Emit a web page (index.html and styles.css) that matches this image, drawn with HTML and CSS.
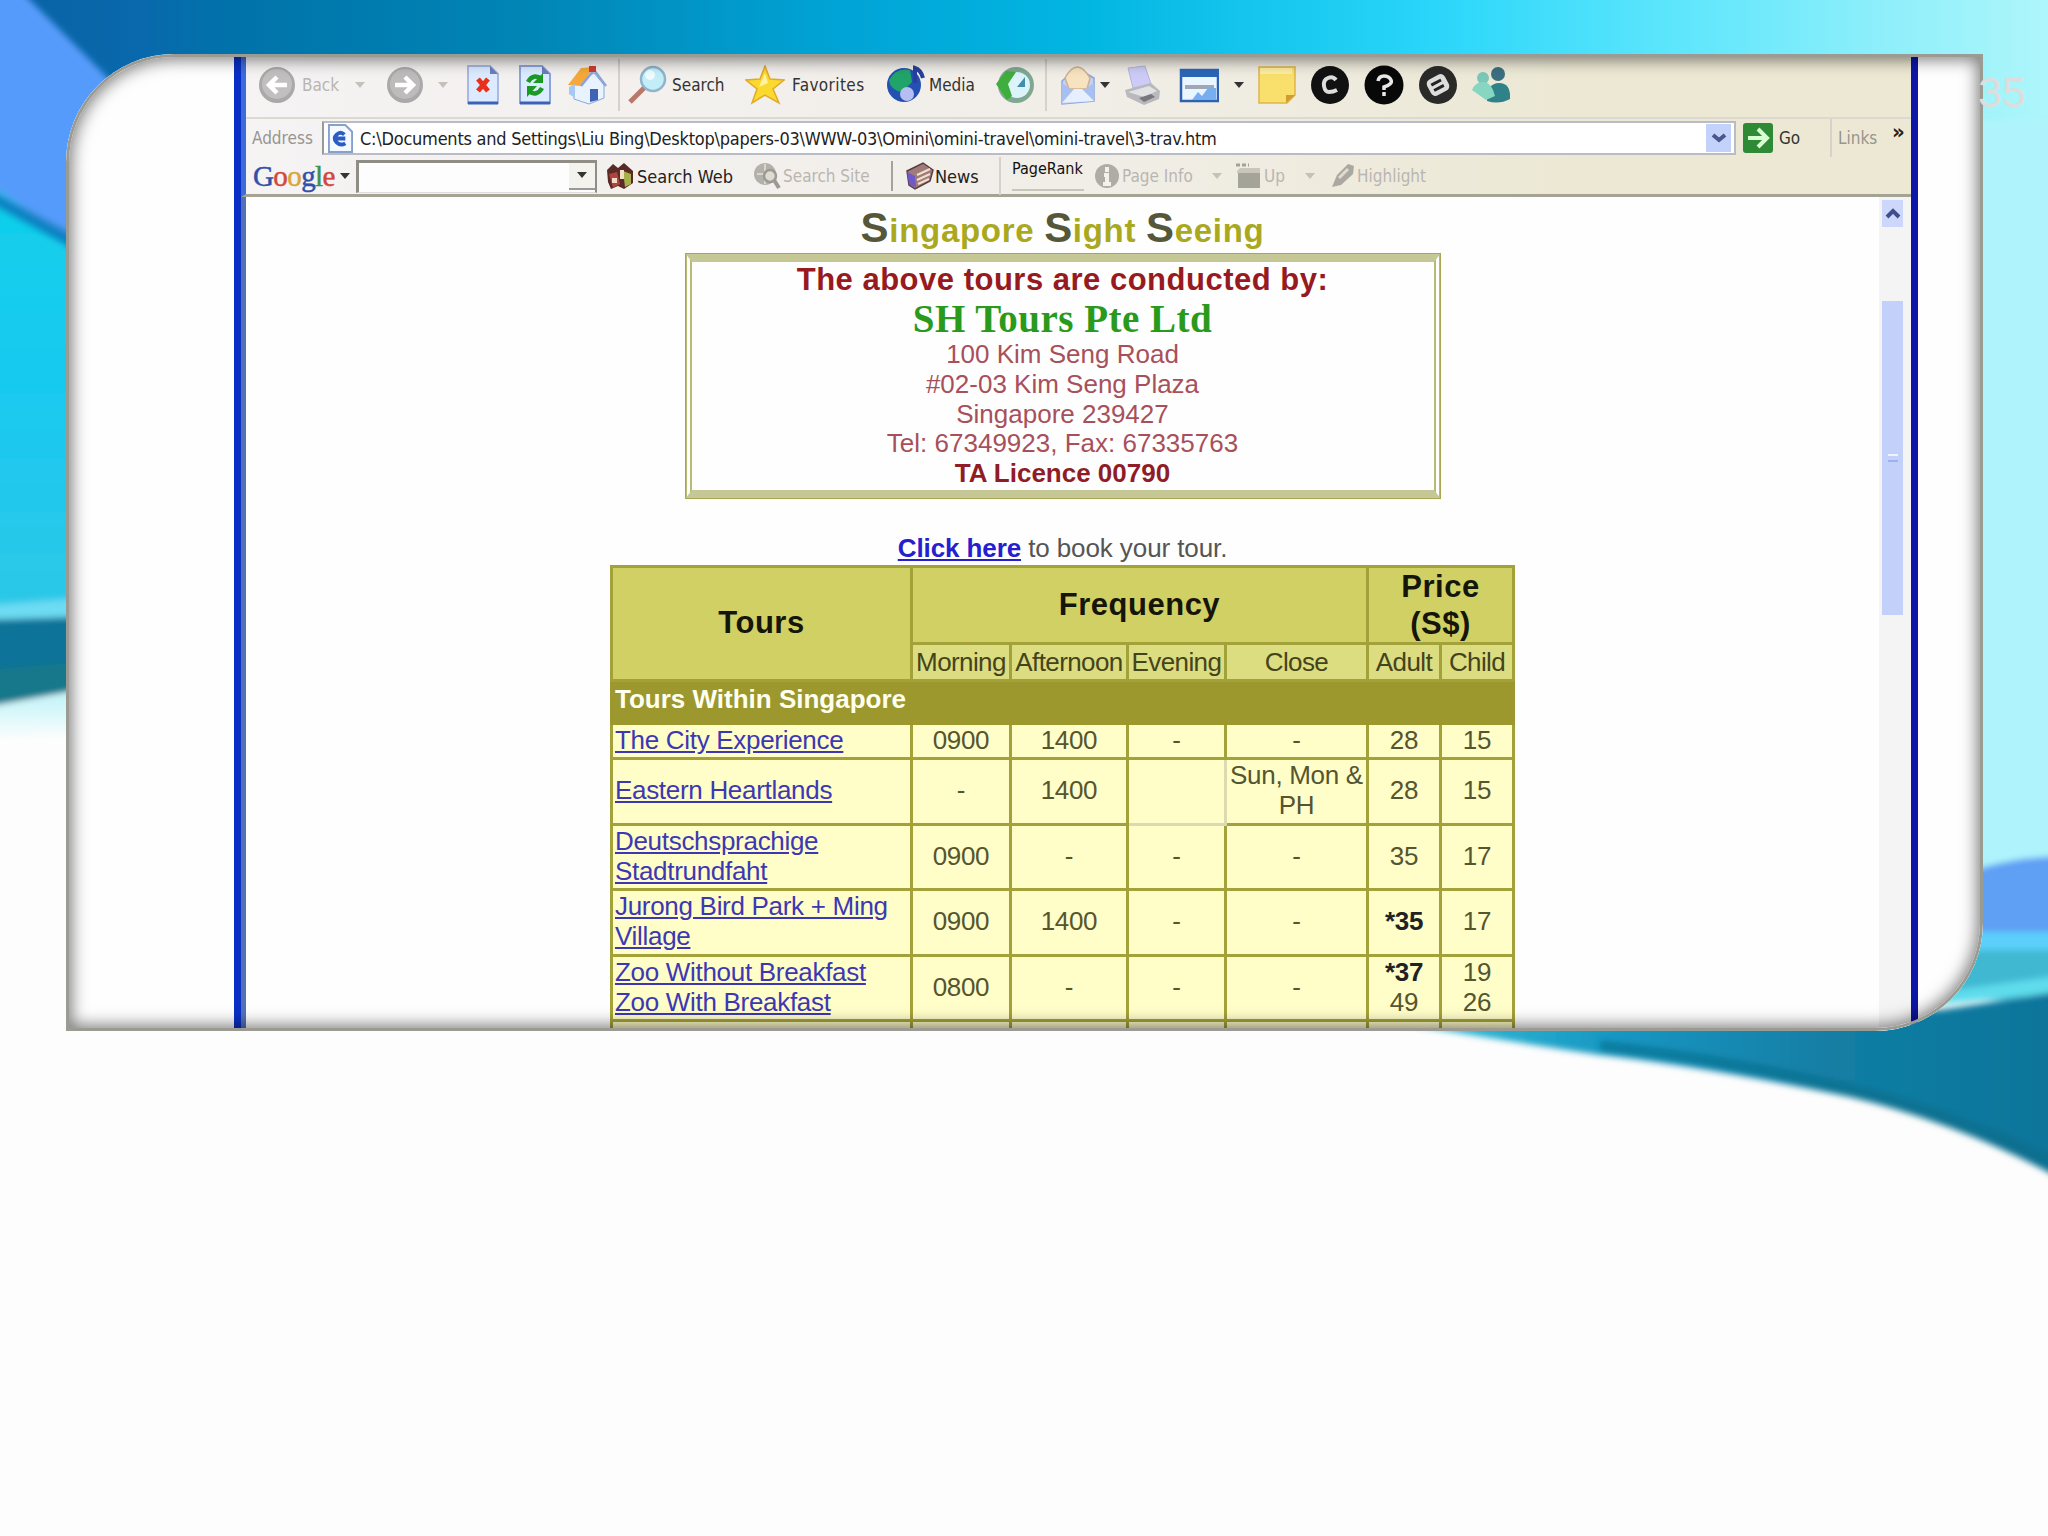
FILE: index.html
```
<!DOCTYPE html>
<html lang="en">
<head>
  <meta charset="UTF-8">
  <title>Singapore Sight Seeing</title>
  <link rel="stylesheet" href="styles.css">
</head>
<body>

<!-- wave background -->
<svg class="waves" viewBox="0 0 2048 1536" width="2048" height="1536" aria-hidden="true">
  <defs>
    <linearGradient id="sky" x1="0" x2="1" y1="0" y2="0">
      <stop offset="0" stop-color="#0a62a4"/>
      <stop offset=".07" stop-color="#0869ac"/>
      <stop offset=".12" stop-color="#0074aa"/>
      <stop offset=".26" stop-color="#0086b6"/>
      <stop offset=".4" stop-color="#00a2d4"/>
      <stop offset=".53" stop-color="#02b6e2"/>
      <stop offset=".7" stop-color="#2ad6fa"/>
      <stop offset=".82" stop-color="#5ee6fc"/>
      <stop offset=".92" stop-color="#8eeffa"/>
      <stop offset="1" stop-color="#aef6fb"/>
    </linearGradient>
    <linearGradient id="sea" x1="0" x2="1" y1="0" y2="0">
      <stop offset="0" stop-color="#3cc4dc"/>
      <stop offset=".35" stop-color="#1596c2"/>
      <stop offset=".65" stop-color="#127ea4"/>
      <stop offset="1" stop-color="#0f7499"/>
    </linearGradient>
    <linearGradient id="cyan" x1="0" x2="0" y1="0" y2="1">
      <stop offset="0" stop-color="#0fd0ea"/>
      <stop offset=".5" stop-color="#1ac9f0"/>
      <stop offset="1" stop-color="#2fc8e6"/>
    </linearGradient>
    <linearGradient id="foam" x1="0" x2="0" y1="0" y2="1">
      <stop offset="0" stop-color="#b5f2f8"/>
      <stop offset="1" stop-color="#fdfdfd"/>
    </linearGradient>
    <filter id="soft"><feGaussianBlur stdDeviation="3"/></filter>
  </defs>
  <rect width="2048" height="1536" fill="#fdfdfd"/>
  <rect width="2048" height="200" fill="url(#sky)"/>
  <g filter="url(#soft)">
    <path d="M-20-20H10L110 80V260H-20z" fill="#559bfb"/>
    <path d="M-20 180L110 260V620H-20z" fill="url(#cyan)"/>
    <path d="M-20 184L110 254V270L-20 198z" fill="#0f83c4"/>
    <path d="M-20 606L110 596V620H-20z" fill="#6ddcf3"/>
    <path d="M-20 620L110 616V680L-20 708z" fill="#0c7398"/>
    <path d="M-20 670L110 660V684L-20 708z" fill="#14788a"/>
    <path d="M-20 708L110 686V730L-20 740z" fill="url(#foam)"/>
    <path d="M1950 120H2070V900H1950z" fill="#aff4fc"/>
    <path d="M1950 880Q2000 856 2070 856V960H1950z" fill="#5f9ff4"/>
    <path d="M1950 932H2070V955H1950z" fill="#5cd0fa"/>
    <path d="M1950 950H2070V1000H1950z" fill="#3fb8d2"/>
    <path d="M1940 992L2070 974V992L1940 1004z" fill="#5fdcec"/>
    <path d="M1380 1010H1940L2070 990V1184Q1960 1122 1850 1097Q1700 1066 1600 1055Q1500 1040 1380 1020z" fill="url(#sea)"/>
    <path d="M1600 1052Q1900 1084 2070 1184V1164Q1900 1074 1600 1040z" fill="#0c6c88" opacity=".6"/>
  </g>
</svg>

<div class="slide-number">35</div>

<div class="frame">
  <div class="window">

    <div class="bars">
      <div class="bar bar-main">
        <svg class="icon" viewBox="0 0 40 40"><circle cx="19" cy="20" r="18" fill="#aaa8a8"/><circle cx="19" cy="19" r="15" fill="#c2bfc0"/><path d="M29 20H12M19 12l-8 8 8 8" stroke="#fff" stroke-width="4.5" fill="none"/></svg>
        <span class="off">Back</span>
        <i class="caret off"></i>
        <svg class="icon" viewBox="0 0 40 40"><circle cx="19" cy="20" r="18" fill="#aaa8a8"/><circle cx="19" cy="19" r="15" fill="#bdbbbb"/><path d="M9 20h17M19 12l8 8-8 8" stroke="#fff" stroke-width="4.5" fill="none"/></svg>
        <i class="caret off"></i>
        <svg class="icon" viewBox="0 0 40 40"><path d="M1 1h22l8 8v29H1z" fill="#dcebff" stroke="#a9b8e4" stroke-width="2"/><path d="M23 1v8h8z" fill="#6a7fc4"/><path d="M1 38h30" stroke="#3a62b8" stroke-width="3"/><path d="M11 14l10 12M21 14L11 26" stroke="#e8301c" stroke-width="5"/></svg>
        <svg class="icon" viewBox="0 0 40 40"><path d="M1 1h22l8 8v29H1z" fill="#dcebff" stroke="#8da3dc" stroke-width="2"/><path d="M23 1v8h8z" fill="#6a7fc4"/><path d="M1 38h30" stroke="#3a62b8" stroke-width="3"/><path d="M9 17q5-9 14-3M23 23q-5 9-14 3" stroke="#1a9a24" stroke-width="4.5" fill="none"/><path d="M24 8v10H14zM8 32V21h10z" fill="#1a9a24"/></svg>
        <svg class="icon" viewBox="0 0 40 40"><path d="M7 20v14l15 5 15-6V20L27 8z" fill="#e9f2ff" stroke="#88a8dc"/><path d="M1 20L14 3l13-1-13 19z" fill="#f6a93a"/><path d="M14 21L27 5l12 16" stroke="#8aa5d8" stroke-width="2.5" fill="none"/><path d="M22 1h7v6h-7z" fill="#d03c30"/><path d="M23 24h8v11l-8 2z" fill="#3f63b4"/><path d="M2 22l6-3v14l-6-4z" fill="#a8c8f4"/></svg>
        <i class="sep"></i>
        <svg class="icon" viewBox="0 0 40 40"><path d="M3 37L18 22" stroke="#b8796a" stroke-width="5"/><circle cx="26" cy="14" r="12" fill="#c3eef8" stroke="#8fb4cc" stroke-width="2.5"/><circle cx="23" cy="10" r="5" fill="#effcff"/></svg>
        <span>Search</span>
        <svg class="icon" viewBox="0 0 40 40"><path d="M20 1l5 13 14 1-11 9 6 14-14-8-13 8 5-14L1 15l14-1z" fill="#fbd92e" stroke="#e3a92a" stroke-width="1.5"/><path d="M20 8l3 10-9 4z" fill="#fff3a0"/></svg>
        <span class="fav">Favorites</span>
        <svg class="icon" viewBox="0 0 40 40"><circle cx="18" cy="20" r="17" fill="#2450b4"/><path d="M3 15Q10 2 24 5l2 12-10 10Q4 25 3 15z" fill="#21a46a"/><circle cx="21" cy="29" r="7" fill="#b5bef2"/><path d="M29 18V3q6 2 8 10" stroke="#27409c" stroke-width="4" fill="none"/></svg>
        <span>Media</span>
        <svg class="icon" viewBox="0 0 40 40"><circle cx="21" cy="20" r="18" fill="#7fa892"/><circle cx="22" cy="20" r="13" fill="#dcf3fa"/><path d="M1 19l10-13 10 1-8 12 4 12-5 4z" fill="#3fae3c"/><path d="M22 22l8-10v10z" fill="#3f8fac"/></svg>
        <i class="sep"></i>
        <svg class="icon" viewBox="0 0 40 40"><path d="M2 16L17 3l17 10v23L2 39z" fill="#c2d2f6" stroke="#8ea4dc" stroke-width="1.5"/><path d="M5 13q12-22 25 0l-3 11H9z" fill="#f7e3c0" stroke="#d0b090" stroke-width="1.5"/><path d="M2 18l16 11 16-11v18L2 39z" fill="#a8bff2"/><path d="M2 38l12-14h8l12 12" fill="#e6effe"/></svg>
        <i class="caret"></i>
        <svg class="icon" viewBox="0 0 40 40"><path d="M5 3l17-2 6 18-18 4z" fill="#ccccf6" stroke="#b4b4dc"/><path d="M2 25l26-7 9 8-1 8-15 6L4 32z" fill="#b9b8bd"/><path d="M5 27l21-6 8 5-13 6z" fill="#e2e1e4"/><path d="M16 33l12-4 4 3-11 5z" fill="#77777c"/></svg>
        <svg class="icon" viewBox="0 0 40 40"><rect x="2" y="5" width="37" height="31" fill="#e9f5ff" stroke="#2c62b0" stroke-width="2.5"/><path d="M1 4h39v8H1z" fill="#2a66b8"/><path d="M6 22h29" stroke="#a0a8b8" stroke-width="4"/><path d="M13 35l6-8 4 4 6-8 8 0v12z" fill="#76aef0"/></svg>
        <i class="caret"></i>
        <svg class="icon" viewBox="0 0 40 40"><path d="M2 2h36v28l-8 8H2z" fill="#f9df6c" stroke="#e0b548" stroke-width="1.5"/><path d="M3 3h32v6H3z" fill="#fdeea0"/><path d="M38 30h-9v8z" fill="#cf9c30"/></svg>
        <svg class="icon" viewBox="0 0 40 40"><circle cx="20" cy="20" r="19" fill="#111"/><path d="M26 15q-3-4-8-2t-4 8 5 6 8-2" stroke="#ddd" stroke-width="4" fill="none"/></svg>
        <svg class="icon" viewBox="0 0 40 40"><circle cx="20" cy="20" r="19.5" fill="#080808"/><path d="M14 16q1-5 6-5t7 4-7 7v3M20 27v4" stroke="#e8e8e8" stroke-width="3.5" fill="none"/></svg>
        <svg class="icon" viewBox="0 0 40 40"><circle cx="20" cy="20" r="19" fill="#2a2a28"/><g transform="rotate(-28 20 20)"><rect x="10" y="11" width="20" height="18" rx="5" fill="#ddd"/><path d="M14 17h11M14 23h11" stroke="#222" stroke-width="3"/></g></svg>
        <svg class="icon" viewBox="0 0 40 40"><circle cx="27" cy="9" r="7" fill="#3a7080"/><path d="M16 36q0-18 12-18t11 16q-11 6-23 2z" fill="#2f8287"/><circle cx="12" cy="13" r="6" fill="#7cc8b8"/><path d="M1 25q4-9 12-8t11 14l-9 4z" fill="#86d6c2"/></svg>
      </div>

      <div class="bar bar-address">
        <span class="off dim">Address</span>
        <div class="address">
          <svg class="page-icon" viewBox="0 0 28 30"><path d="M2 1h17l7 7v21H2z" fill="#f4f9ff" stroke="#8aa0cc" stroke-width="2"/><path d="M18 11q-4-4-8 0t0 8 9 1M7 15h12" stroke="#2a5cc4" stroke-width="4" fill="none"/></svg>
          <span class="url">C:\Documents and Settings\Liu Bing\Desktop\papers-03\WWW-03\Omini\omini-travel\omini-travel\3-trav.htm</span>
          <span class="drop"><svg viewBox="0 0 16 10" width="16" height="10"><path d="M2 2l6 5 6-5" stroke="#46588c" stroke-width="4" fill="none"/></svg></span>
        </div>
        <svg class="go" viewBox="0 0 30 30"><rect width="30" height="30" rx="3" fill="#2f8a35"/><path d="M5 15h18M15 6l9 9-9 9" stroke="#d8ffd0" stroke-width="4" fill="none"/></svg>
        <span>Go</span>
        <i class="sep"></i>
        <span class="dim">Links</span>
        <b class="more">»</b>
      </div>

      <div class="bar bar-google">
        <span class="google"><span class="g1">G</span><span class="g2">o</span><span class="g3">o</span><span class="g1">g</span><span class="g4">l</span><span class="g2">e</span></span>
        <i class="caret"></i>
        <div class="query"><span class="query-drop"><i class="caret"></i></span></div>
        <svg class="small" viewBox="0 0 28 28"><path d="M1 8l6-6 5 4 6-5 9 8v12l-9 6-6-3-7 3-3-7z" fill="#5a2a26"/><path d="M3 12l8-2 3 12-7 4z" fill="#b0433c"/><path d="M6 16h5v5H6z" fill="#f3d8cc"/><path d="M17 9l8 3v10l-6 3z" fill="#a8b04c"/><path d="M14 8h4v9h-4z" fill="#efe2c4"/></svg>
        <span class="strong">Search Web</span>
        <svg class="small" viewBox="0 0 28 28"><circle cx="12" cy="12" r="11" fill="#b3b1aa"/><path d="M4 12h16M12 2v20" stroke="#d8d5cc" stroke-width="2"/><circle cx="17" cy="14" r="6" fill="#dedbd2" stroke="#9c9a94" stroke-width="2.5"/><path d="M21 18l5 8" stroke="#9c9a94" stroke-width="4"/></svg>
        <span class="off">Search Site</span>
        <i class="sep dark"></i>
        <svg class="small" viewBox="0 0 28 28"><path d="M1 9L17 1l10 7-3 11-15 8-6-4z" fill="#a07c78" stroke="#5c3c44" stroke-width="1.5"/><path d="M1 10l8 4 1 12-7-4z" fill="#6f58c8"/><path d="M11 13L24 7M11 18l13-6M12 22l11-5" stroke="#f0e0d0" stroke-width="2"/></svg>
        <span class="strong">News</span>
        <i class="sep"></i>
        <div class="pagerank">PageRank</div>
        <svg class="small" viewBox="0 0 28 28"><circle cx="13" cy="14" r="12" fill="#aeaca4"/><path d="M13 5v5M10 13h3v8M9 22h8" stroke="#f4f1e8" stroke-width="4" fill="none"/></svg>
        <span class="off">Page Info</span>
        <i class="caret off"></i>
        <svg class="small" viewBox="0 0 28 28"><path d="M1 3h13" stroke="#a3a198" stroke-width="3" stroke-dasharray="4 2"/><path d="M2 9l3-3h20v5H2z" fill="#c9c7bd"/><rect x="3" y="11" width="22" height="15" fill="#a5a49b"/></svg>
        <span class="off">Up</span>
        <i class="caret off"></i>
        <svg class="small" viewBox="0 0 28 28"><path d="M2 25l5-12L18 2l6 2-1 8-12 11z" fill="#aaa8a0"/><path d="M9 16l9-9" stroke="#dedbd2" stroke-width="3"/></svg>
        <span class="off">Highlight</span>
      </div>
    </div>

    <div class="view">
      <div class="page">
        <h1><b>S</b>ingapore <b>S</b>ight <b>S</b>eeing</h1>

        <div class="operator">
          <div class="lead">The above tours are conducted by:</div>
          <div class="company">SH Tours Pte Ltd</div>
          <p>100 Kim Seng Road<br>#02-03 Kim Seng Plaza<br>Singapore 239427<br>Tel: 67349923, Fax: 67335763<br><b>TA Licence 00790</b></p>
        </div>

        <p class="book"><a href="#">Click here</a> to book your tour.</p>

        <table class="tours">
          <colgroup><col class="c1"><col class="c2"><col class="c3"><col class="c4"><col class="c5"><col class="c6"><col class="c7"></colgroup>
          <tr class="head"><th rowspan="2">Tours</th><th colspan="4">Frequency</th><th colspan="2">Price (S$)</th></tr>
          <tr class="sub"><td>Morning</td><td>Afternoon</td><td>Evening</td><td>Close</td><td>Adult</td><td>Child</td></tr>
          <tr class="group"><th colspan="7">Tours Within Singapore</th></tr>
          <tr class="one"><td><a href="#">The City Experience</a></td><td>0900</td><td>1400</td><td>-</td><td>-</td><td>28</td><td>15</td></tr>
          <tr><td><a href="#">Eastern Heartlands</a></td><td>-</td><td>1400</td><td class="blank"></td><td>Sun, Mon &amp; PH</td><td>28</td><td>15</td></tr>
          <tr><td><a href="#">Deutschsprachige Stadtrundfaht</a></td><td>0900</td><td>-</td><td>-</td><td>-</td><td>35</td><td>17</td></tr>
          <tr><td><a href="#">Jurong Bird Park + Ming Village</a></td><td>0900</td><td>1400</td><td>-</td><td>-</td><td><b>*35</b></td><td>17</td></tr>
          <tr><td><a href="#">Zoo Without Breakfast</a><br><a href="#">Zoo With Breakfast</a></td><td>0800</td><td>-</td><td>-</td><td>-</td><td><b>*37</b><br>49</td><td>19<br>26</td></tr>
          <tr class="next"><td></td><td></td><td></td><td></td><td></td><td></td><td></td></tr>
        </table>
      </div>

      <div class="scrollbar">
        <div class="up"><svg viewBox="0 0 16 12" width="16" height="12"><path d="M2 9l6-6 6 6" stroke="#3f4f8c" stroke-width="4" fill="none"/></svg></div>
        <div class="thumb"><i></i></div>
      </div>
    </div>

  </div>
</div>

</body>
</html>
```
FILE: styles.css
```
* { box-sizing: border-box; }
body { margin:0; width:2048px; height:1536px; overflow:hidden; position:relative; background:#fdfdfd; font-family:"Liberation Sans", Arial, sans-serif; }
.waves { position:absolute; left:0; top:0; }

.frame { position:absolute; left:66px; top:54px; width:1917px; height:977px; background:#fefefe; border-radius:108px 0 108px 0; overflow:hidden; }
.frame::after { content:""; position:absolute; inset:0; border-radius:inherit; border:3px solid #9b9b93; box-shadow:inset 0 0 16px 3px rgba(0,0,0,.5); pointer-events:none; }
.slide-number { position:absolute; z-index:2; left:1978px; top:68px; font-size:43px; line-height:48px; color:#dfdcdc; }

.window { margin-left:168px; width:1684px; height:977px; border-left:7px solid #0a2fc4; border-right:7px solid #0d16a8; display:flex; flex-direction:column; }

/* toolbars */
.bars { height:143px; border-left:5px solid #3c6cdc; border-bottom:3px solid #a5a393; background:linear-gradient(90deg, #f5f3f3, #f1eee8 50%, #ece8d4 80%); font-family:"DejaVu Sans Condensed", "DejaVu Sans", sans-serif; font-size:17px; color:#333; }
.bar { display:grid; align-items:center; justify-items:start; white-space:nowrap; }
.bar-main { height:65px; padding:0 0 2px 12px; border-bottom:2px solid #dcd9d2; grid-template-columns:44px 53px 31px 52px 29px 52px 48px 51px 9px 45px 73px 47px 94px 43px 66px 50px 15px 40px 23px 56px 55px 23px 53px 54px 54px 53px auto; }
.bar-address { height:38px; padding-left:6px; grid-template-columns:70px 1421px 36px 51px 8px 54px auto; }
.bar-google { height:37px; padding-left:7px; grid-template-columns:87px 16px 250px 31px 116px 30px 108px 15px 29px 64px 13px 82px 28px 90px 23px 29px 41px 25px 27px auto; }
.icon { width:40px; height:40px; }
.small { width:28px; height:28px; }
.off { color:#b9b6b1; }
.dim { color:#98958f; }
.strong { font-size:18px; color:#222; }
.sep { width:2px; height:38px; background:#d6d2cb; }
.sep.dark { height:30px; background:#a5a299; }
.bar-main .sep { height:52px; }
.caret { width:0; height:0; border:5px solid transparent; border-top:6px solid #333; border-bottom:0; }
.caret.off { border-top-color:#c4c1bb; }
.fav { letter-spacing:.4px; }

.address { width:1414px; height:34px; display:flex; align-items:center; background:#fff; border:2px solid #b9bcc4; border-left-color:#999; padding:0 3px; }
.page-icon { width:27px; height:29px; margin-right:6px; }
.url { flex:1; font-size:18px; letter-spacing:-.24px; color:#222; }
.drop { width:25px; height:28px; display:flex; align-items:center; justify-content:center; background:#c3d2fa; }
.go { width:30px; height:30px; }
.more { font-size:22px; margin-top:-14px; color:#222; }

.google { font-family:"Liberation Serif", serif; font-size:29px; line-height:30px; letter-spacing:-.6px; -webkit-text-stroke:.5px; }
.g1 { color:#3350a8; }
.g2 { color:#d0493c; }
.g3 { color:#d9a63a; }
.g4 { color:#3a9150; }
.query { width:241px; height:33px; background:#fdfdfd; border:3px solid #8f8d86; border-bottom:1px solid #ddd; border-right-width:2px; display:flex; justify-content:flex-end; }
.query-drop { width:26px; margin-bottom:2px; background:#f4f2ec; border-bottom:2px solid #999; display:flex; align-items:center; justify-content:center; }
.pagerank { width:72px; height:30px; font-size:16px; line-height:16px; color:#111; border-bottom:2px solid #c8c5ba; }

/* page content */
.view { flex:1; display:flex; border-left:5px solid #5272b8; }
.page { flex:1; padding-top:6px; text-align:center; color:#333; }
h1 { margin:0; height:50px; line-height:50px; font-size:33px; letter-spacing:.7px; color:#a9a81f; }
h1 b { font-size:42px; color:#55563a; }

.operator { width:756px; height:246px; margin:0 auto; border:7px double #b9ba74; border-top:9px solid #c5c894; border-bottom:9px solid #c5c894; outline:1px solid #a9a850; outline-offset:-1px; }
.lead { font-size:31px; line-height:36px; font-weight:bold; letter-spacing:.5px; color:#961a20; }
.company { font:bold 39px/42px "Liberation Serif", serif; letter-spacing:.5px; color:#2a9a1c; }
.operator p { margin:0; font-size:26px; line-height:29.8px; color:#a8505a; }
.operator p b { color:#8f1c26; }

.book { margin:33px 0 0; height:33px; line-height:32px; font-size:26px; letter-spacing:-.1px; color:#555; }
.book a { font-weight:bold; color:#2420d0; }

.tours { width:905px; margin:0 auto; table-layout:fixed; border-collapse:collapse; font-size:26px; line-height:30px; letter-spacing:-.3px; color:#55552f; background:#fffdc8; }
.tours th, .tours td { border:3px solid #a3a23a; padding:0 0 2px; height:65.5px; text-align:center; }
.c1 { width:300px; } .c2 { width:99px; } .c3 { width:117px; } .c4 { width:98px; } .c5 { width:142px; } .c6 { width:73px; } .c7 { width:73px; }
.tours .head th { height:77px; background:#d0d064; font-size:31px; line-height:37px; letter-spacing:.5px; color:#15150a; }
.tours .head th:last-child { padding:0 15px; }
.tours .sub td { height:37px; padding:0; background:#dcdc80; color:#44441c; letter-spacing:-.6px; }
.tours .group th { height:43px; background:#9c982e; border-color:#9c982e; color:#fffff0; text-align:left; padding:0 0 6px 2px; letter-spacing:0; }
.tours .one td { height:35px; }
.tours td:first-child { text-align:left; padding-left:2px; }
.tours .sub td:first-child { text-align:center; padding:0; }
.tours a { color:#3c38b4; }
.tours b { color:#222; }
.tours .blank { border-color:#dcdab0; }

.scrollbar { width:32px; background:#f5f4f4; padding:3px 8px 0 3px; }
.up { height:27px; display:flex; align-items:center; justify-content:center; background:#ccd7fb; }
.thumb { height:314px; margin-top:74px; background:#c3d1fa; display:flex; align-items:center; justify-content:center; }
.thumb i { width:10px; height:8px; border-top:2px solid #eef3ff; border-bottom:2px solid #9db2ec; }
```
